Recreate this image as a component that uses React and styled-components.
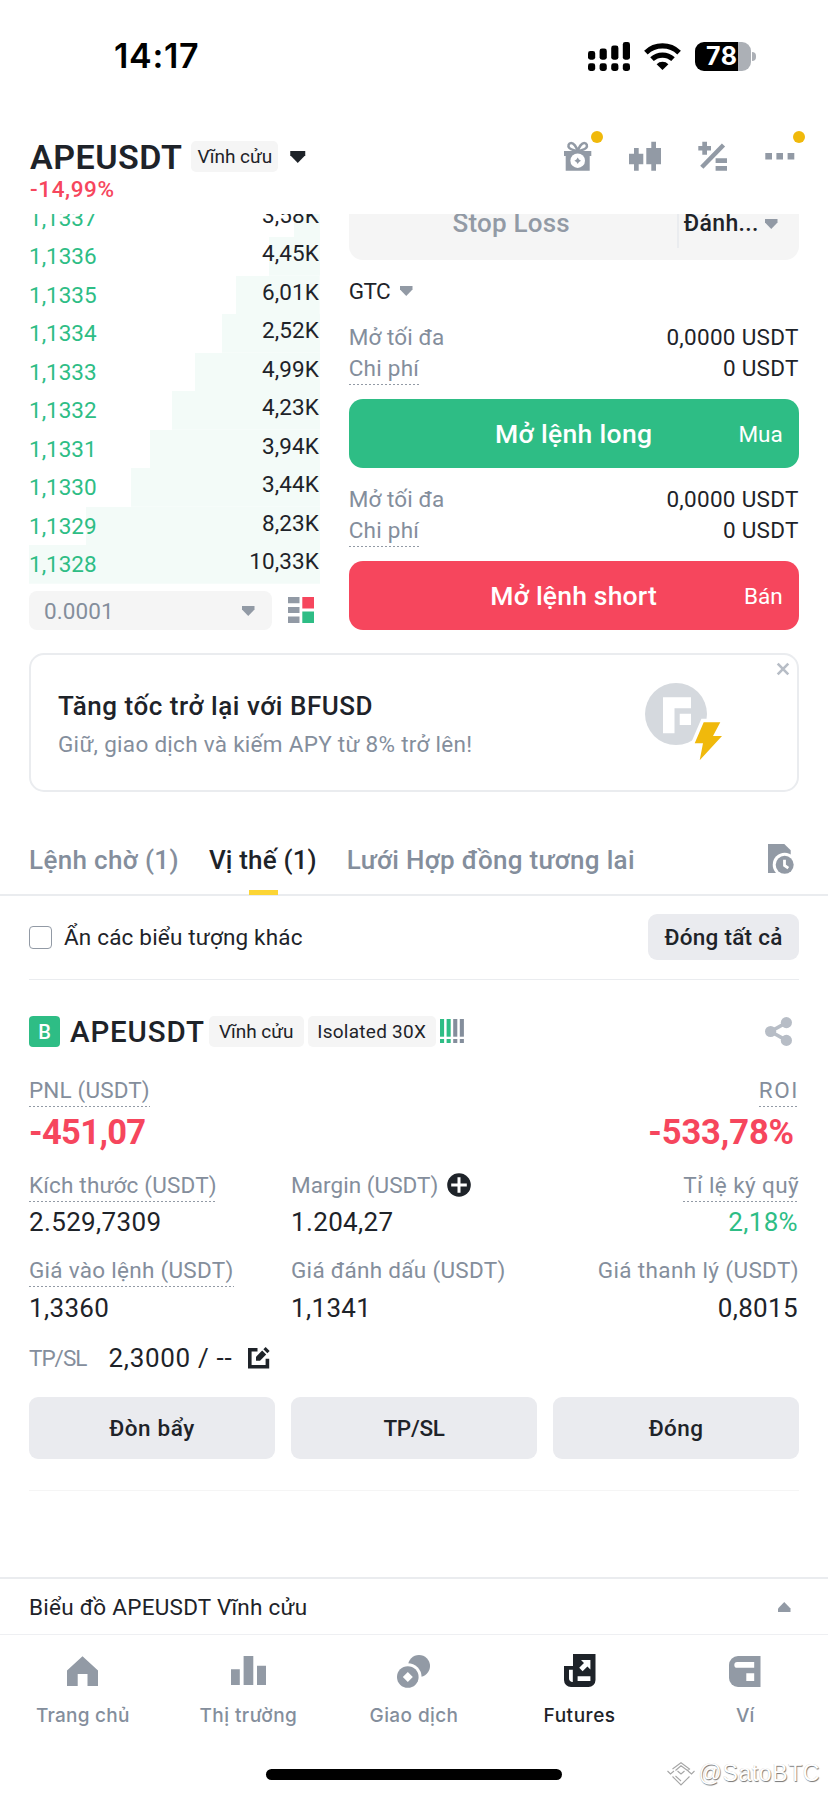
import React from 'react';
import styled, { createGlobalStyle } from 'styled-components';

const c = {
  ink: '#1e2329', sub: '#848e9c', icon: '#929aa5', green: '#2ebd85', red: '#f6465d',
  yellow: '#f0b90b', soft: '#f5f5f5', line: '#eaecef', chip: '#eaebef',
};

const GlobalStyle = createGlobalStyle`
  * { box-sizing: border-box; }
  body { margin: 0; background: #fff; }
  button { border: 0; margin: 0; padding: 0; font: inherit; color: inherit; }
`;

const Screen = styled.div`
  position: relative;
  width: 828px;
  height: 1795px;
  overflow: hidden;
  display: flex;
  flex-direction: column;
  background: #fff;
  color: ${c.ink};
  font-family: Roboto, "Noto Sans", sans-serif;
  font-size: 22.5px;
  line-height: 24px;
  white-space: nowrap;
`;

const Text = styled.span`
  color: ${p => p.$color || 'inherit'};
  font-size: ${p => p.$size || 22.5}px;
  font-weight: ${p => p.$weight || 400};
  letter-spacing: ${p => p.$track || 0}px;
`;

const Icon = styled.svg`
  display: block;
  flex: none;
  overflow: visible;
`;

/* ---------- status bar ---------- */
const StatusBar = styled.header`
  flex: none;
  height: 111px;
  padding: 1px 77px 0 114px;
  display: flex;
  align-items: center;
  color: #000;
  font-family: Inter, sans-serif;
`;
const StatusIcons = styled.div`
  margin-left: auto;
  display: flex;
  align-items: center;
  gap: 14px;
`;
const Battery = styled.div`
  position: relative;
  width: 56px;
  height: 29px;
  border-radius: 9px;
  background: linear-gradient(90deg, #000 43px, #acb0b6 43px);
  color: #fff;
  padding-left: 11px;
  line-height: 29px;
  &::after {
    content: '';
    position: absolute;
    left: 57px;
    top: 10px;
    width: 3.5px;
    height: 9px;
    border-radius: 0 4px 4px 0;
    background: #acb0b6;
  }
`;

/* ---------- symbol header ---------- */
const SymbolHeader = styled.section`
  flex: none;
  height: 103px;
  padding: 30px 32px 0 30px;
  display: flex;
  justify-content: space-between;
  align-items: flex-start;
`;
const SymbolTitle = styled.div`
  display: flex;
  align-items: center;
  height: 31px;
`;
const TitleCaret = styled.span`
  margin-left: 12px;
`;
const Change = styled.div`
  margin-top: 5px;
  height: 24px;
`;
const Tag = styled.span`
  height: 31px;
  line-height: 31px;
  width: ${p => p.$w}px;
  margin-left: ${p => p.$ml || 0}px;
  text-align: center;
  border-radius: 5px;
  background: ${c.soft};
  font-size: 19px;
  letter-spacing: ${p => p.$track || 0}px;
`;
const Tools = styled.div`
  display: flex;
  gap: 35.3px;
  margin-top: -1px;
`;
const Tool = styled.div`
  position: relative;
  width: 32px;
  height: 32px;
  &::after {
    content: '';
    display: ${p => (p.$dot ? 'block' : 'none')};
    position: absolute;
    left: 29px;
    top: -9px;
    width: 12px;
    height: 12px;
    border-radius: 50%;
    background: ${c.yellow};
  }
`;

/* ---------- trading area ---------- */
const TradeArea = styled.section`
  flex: none;
  height: 416px;
  overflow: hidden;
  padding: 0 29px;
  display: grid;
  grid-template-columns: 291px 450px;
  column-gap: 28.7px;
`;
const OrderBook = styled.div`
  margin-top: -15.5px;
`;
const BookRow = styled.div`
  display: flex;
  justify-content: space-between;
  height: 38.5px;
  padding: 0 1px 0 0;
  background: linear-gradient(#f3fbf8, #f3fbf8) right / ${p => p.$depth}px 100% no-repeat;
`;
const Price = styled.span`
  padding-top: 7px;
  color: ${c.green};
`;
const Amount = styled.span`
  padding-top: 4px;
  letter-spacing: 0.1px;
`;
const BookFooter = styled.div`
  display: flex;
  align-items: center;
  margin-top: 7.5px;
`;
const Precision = styled.div`
  width: 243px;
  height: 38.5px;
  margin-right: 15.5px;
  padding: 1px 18px 0 15px;
  display: flex;
  align-items: center;
  justify-content: space-between;
  border-radius: 8px;
  background: ${c.soft};
  color: ${c.sub};
`;
const OrderForm = styled.div`
  display: flex;
  flex-direction: column;
  margin-top: -23px;
`;
const StopLossField = styled.div`
  flex: none;
  height: 69px;
  display: flex;
  align-items: center;
  padding: 0 21px 4px 0;
  border-radius: 0 0 14px 14px;
  background: ${c.soft};
`;
const FieldHint = styled.div`
  width: 328px;
  padding-right: 3px;
  text-align: center;
`;
const FieldMode = styled.div`
  flex: 1;
  height: 49px;
  border-left: 2px solid ${c.line};
  display: flex;
  align-items: center;
  justify-content: space-between;
  padding-left: 5px;
`;
const Tif = styled.div`
  display: flex;
  align-items: center;
  gap: 10px;
  height: 24px;
  margin-top: 19px;
`;
const InfoRow = styled.div`
  flex: none;
  height: 24px;
  margin-top: ${p => p.$mt}px;
  display: flex;
  justify-content: space-between;
  align-items: flex-start;
`;
const Hint = styled.span`
  display: inline-block;
  flex: none;
  height: 29px;
  color: ${c.sub};
  letter-spacing: ${p => p.$track || 0.1}px;
  background: ${p => (p.$dashed
    ? `linear-gradient(90deg, ${c.icon} 55%, transparent 55%) left bottom / 4px 1px repeat-x`
    : 'none')};
`;
const OrderButton = styled.button`
  flex: none;
  height: 69px;
  margin-top: 19px;
  padding: 0 16px;
  display: grid;
  grid-template-columns: 1fr auto 1fr;
  align-items: center;
  border-radius: 14px;
  background: ${p => p.$bg};
  color: #fff;
`;
const Side = styled.span`
  justify-self: end;
`;

/* ---------- promo banner ---------- */
const Banner = styled.section`
  flex: none;
  position: relative;
  height: 138.5px;
  margin: 23px 29px 0;
  padding: 0 74px 0 27px;
  display: flex;
  justify-content: space-between;
  border: 2px solid ${c.line};
  border-radius: 15px;
`;
const BannerCopy = styled.div`
  padding-top: 39px;
  display: flex;
  flex-direction: column;
  gap: 14px;
`;
const BannerArt = styled.div`
  padding-top: 27.5px;
`;
const CloseMark = styled.div`
  position: absolute;
  right: 8px;
  top: 8px;
`;

/* ---------- tabs ---------- */
const Tabs = styled.nav`
  flex: none;
  height: 65.5px;
  margin-top: 38.5px;
  padding: 0 34px 0 29px;
  display: flex;
  border-bottom: 2px solid ${c.line};
`;
const Tab = styled.div`
  position: relative;
  margin-right: 30px;
  line-height: 60px;
  font-size: 26px;
  font-weight: 500;
  letter-spacing: ${p => p.$track}px;
  color: ${p => (p.$active ? c.ink : c.sub)};
  &::after {
    content: '';
    display: ${p => (p.$active ? 'block' : 'none')};
    position: absolute;
    left: calc(50% - 14px);
    bottom: -1px;
    width: 29px;
    height: 5px;
    background: #fcd535;
  }
`;
const History = styled.div`
  margin: 14px 0 0 auto;
`;

/* ---------- position list ---------- */
const FilterRow = styled.div`
  flex: none;
  height: 84px;
  margin: 0 29px;
  display: flex;
  align-items: center;
  border-bottom: 1.5px solid ${c.line};
`;
const Checkbox = styled.span`
  width: 23px;
  height: 23px;
  margin-right: 12px;
  border: 1.5px solid ${c.icon};
  border-radius: 4px;
`;
const CloseAll = styled.button`
  width: 151px;
  height: 46px;
  margin-left: auto;
  border-radius: 9px;
  background: ${c.chip};
`;
const Position = styled.section`
  flex: none;
  height: 511px;
  margin: 0 29px;
  padding-top: 36px;
  border-bottom: 1.5px solid #f5f5f5;
`;
const PositionHead = styled.div`
  display: flex;
  align-items: center;
  height: 31px;
`;
const PositionName = styled.span`
  padding-top: 2px;
  font-size: 29.5px;
  font-weight: 500;
  letter-spacing: 0.85px;
`;
const SideBadge = styled.span`
  width: 31px;
  height: 31px;
  margin-right: 10px;
  line-height: 32px;
  text-align: center;
  border-radius: 4px;
  background: ${c.green};
  color: #fff;
  font-size: 20px;
  font-weight: 500;
`;
const LeverageSlot = styled.span`
  margin-left: 4px;
`;
const Share = styled.div`
  margin: 0 7px 0 auto;
`;
const Stats = styled.div`
  display: grid;
  grid-template-columns: ${p => p.$cols};
  column-gap: 16px;
  margin-top: ${p => p.$mt}px;
`;
const Stat = styled.div`
  display: flex;
  flex-direction: column;
  align-items: ${p => (p.$end ? 'flex-end' : 'flex-start')};
`;
const StatLabel = styled.div`
  display: flex;
  height: 29px;
  gap: 9px;
`;
const BigValue = styled.div`
  height: 36px;
  margin-top: 7px;
  padding: 0 5px 0 0;
  line-height: 36px;
  font-size: 34.5px;
  font-weight: 700;
  color: ${c.red};
  letter-spacing: ${p => p.$track}px;
`;
const Value = styled.div`
  height: 28px;
  margin-top: 6.5px;
  padding: 0 1px 0 0;
  line-height: 28px;
  font-size: 26px;
  letter-spacing: 0.35px;
  color: ${p => p.$color || c.ink};
`;
const TpSlRow = styled.div`
  display: flex;
  align-items: center;
  height: 28px;
  margin-top: 22px;
`;
const TpSlLabel = styled.span`
  width: 79.5px;
  color: ${c.sub};
  letter-spacing: -1px;
`;
const TpSlValue = styled.span`
  width: 139px;
  font-size: 26px;
  letter-spacing: 0.7px;
`;
const Actions = styled.div`
  display: grid;
  grid-template-columns: repeat(3, 1fr);
  gap: 16px;
  margin-top: 25.5px;
`;
const Action = styled.button`
  height: 62px;
  border-radius: 9px;
  background: ${c.chip};
`;

/* ---------- bottom ---------- */
const ChartBar = styled.div`
  flex: none;
  height: 58px;
  margin-top: auto;
  padding: 1px 38px 0 29px;
  display: flex;
  align-items: center;
  justify-content: space-between;
  border-top: 2px solid ${c.line};
  border-bottom: 1px solid #eeeff2;
`;
const BottomNav = styled.nav`
  flex: none;
  height: 160px;
  display: grid;
  grid-template-columns: repeat(5, 1fr);
`;
const NavItem = styled.div`
  display: flex;
  flex-direction: column;
  align-items: center;
  color: ${p => (p.$active ? c.ink : c.sub)};
  font: 500 19px/24px Inter, "Noto Sans", sans-serif;
  letter-spacing: ${p => p.$track}px;
`;
const NavIcon = styled.div`
  height: 69px;
  padding-top: 19px;
  display: flex;
  justify-content: center;
  align-items: flex-start;
`;
const HomeIndicator = styled.div`
  position: absolute;
  left: 266px;
  top: 1769px;
  width: 296px;
  height: 10.5px;
  border-radius: 6px;
  background: #000;
`;
const Watermark = styled.div`
  position: absolute;
  right: 8px;
  top: 1760px;
  display: flex;
  align-items: center;
  gap: 4px;
  color: #fff;
  font: 400 23px/27px "Liberation Sans", Arial, sans-serif;
  letter-spacing: 0.6px;
  text-shadow: 0.8px 0.8px 0.8px #777, -0.3px -0.3px 0.5px #ccc;
`;

const Caret = ({ w = 12.5, h = 10, color = c.icon, up }) => (
  <Icon width={w} height={h} viewBox="0 0 12.5 10" fill={color}>
    <path d={up ? 'M0 10V6.500L6.25 0L12.5 6.500V10Z' : 'M0 0V3.5L6.25 10L12.5 3.5V0Z'} />
  </Icon>
);

const Signal = () => (
  <Icon width="42" height="29" viewBox="0 0 42 29">
    {[9, 6.5, 3.5, 0].map((y, i) => (
      <g key={y}>
        <rect x={i * 11.6} y={y} width="7.2" height={17.7 - y} rx="2.4" />
        <rect x={i * 11.6} y="21.3" width="7.2" height="7.7" rx="2.4" />
      </g>
    ))}
  </Icon>
);
const Wifi = () => (
  <Icon width="37" height="27" viewBox="0 0 37 27">
    <path d="M1.9 9.6A24 24 0 0 1 35.1 9.6" fill="none" stroke="#000" strokeWidth="5.2" />
    <path d="M8 16.2A15.4 15.4 0 0 1 29 16.2" fill="none" stroke="#000" strokeWidth="5.2" />
    <path d="M18.5 27L12.6 21.2A8.6 8.6 0 0 1 24.4 21.2Z" />
  </Icon>
);

const Gift = () => (
  <Icon width="32" height="32" viewBox="0 0 32 32" fill={c.icon}>
    <g fill="none" stroke={c.icon} strokeWidth="2.5">
      <path d="M15.7 11.5C14.5 6.5 11.5 3 9.2 3C6.6 3 5.6 6 7.3 8C9 10 12 10.2 15.7 11.5" />
      <path d="M15.7 11.5C16.9 6.5 19.9 3 22.2 3C24.8 3 25.8 6 24.1 8C22.4 10 19.4 10.2 15.7 11.5" />
    </g>
    <path d="M2 11H29.3V16H27.7V30.7H3.7V16H2Z" />
    <circle cx="15.7" cy="20.7" r="7.3" fill="#fff" />
    <path d="M15.7 17.4L17 19.5L19 20.7L17 22L15.7 24L14.4 22L12.4 20.7L14.4 19.5Z" />
  </Icon>
);
const Candles = () => (
  <Icon width="32" height="32" viewBox="0 0 32 32" fill={c.icon}>
    <path d="M5 8H9.7V13.7H14.3V24.3H9.7V30.7H5V24.3H0V13.7H5Z" />
    <path d="M22.3 1.7H27V8H32V24.3H27V30.7H22.3V24.3H17.3V8H22.3Z" />
  </Icon>
);
const Calculator = () => (
  <Icon width="32" height="32" viewBox="0.7 0 32 32" fill={c.icon}>
    <path d="M6 1.7H10.7V5.9H14.7V10.5H10.7V14.7H6V10.5H2V5.9H6Z" />
    <path d="M5.5 27.2L27.2 5" stroke={c.icon} strokeWidth="4.5" />
    <path d="M19.3 18.3H30.7V23H19.3ZM19.3 26H30.7V30.7H19.3Z" />
  </Icon>
);
const More = () => (
  <Icon width="32" height="32" viewBox="0 0 32 32" fill={c.icon}>
    <path d="M1.3 13H8V19.6H1.3ZM12.4 13H19V19.6H12.4ZM23.6 13H30.3V19.6H23.6Z" />
  </Icon>
);
const BookLayout = () => (
  <Icon width="26" height="26" viewBox="0 0 26 26">
    <path fill={c.icon} d="M0 0H11.5V6.3H0ZM0 10H11.5V16H0ZM0 19.6H11.5V26H0Z" />
    <path fill={c.red} d="M14.3 0H26V11.5H14.3Z" />
    <path fill={c.green} d="M14.3 14.5H26V26H14.3Z" />
  </Icon>
);
const BannerIcon = () => (
  <Icon width="78" height="78" viewBox="0 0 78 78">
    <circle cx="31" cy="31" r="31" fill="#d5d9de" />
    <path fill="#fff" d="M18 14.3H46V25.3H29.5V50.3H18ZM34.7 30.7H46V42H34.7Z" />
    <path d="M58.7 39.3H75.3L68 53H77L54.7 77.3L58 60.3H49.7Z" fill={c.yellow} stroke="#fff" strokeWidth="7" paintOrder="stroke" />
  </Icon>
);
const HistoryIcon = () => (
  <Icon width="26" height="30" viewBox="0 0 26 30" fill={c.icon}>
    <path d="M0 0H16.3L22.7 6.3V29H0Z" />
    <circle cx="16.7" cy="20.8" r="12" fill="#fff" />
    <circle cx="16.7" cy="20.8" r="9" />
    <path d="M16.5 15.8V21.5L20.3 24.2" fill="none" stroke="#fff" strokeWidth="2.8" />
  </Icon>
);
const Leverage = () => (
  <Icon width="24" height="24" viewBox="0 0 24 24">
    {[c.green, c.green, c.sub, c.sub].map((f, i) => (
      <g key={i} fill={f}>
        <rect x={i * 6.6} width="4.1" height="17.7" />
        <rect x={i * 6.6} y="20" width="4.1" height="4" />
      </g>
    ))}
  </Icon>
);
const ShareIcon = () => (
  <Icon width="27" height="29" viewBox="0 0 27 29" fill="#b7bdc6">
    <path d="M5.6 14.5L21.4 5.6M5.6 14.5L21.4 23.4" stroke="#b7bdc6" strokeWidth="3.6" />
    <circle cx="5.6" cy="14.5" r="5.6" />
    <circle cx="21.4" cy="5.6" r="5.6" />
    <circle cx="21.4" cy="23.4" r="5.6" />
  </Icon>
);
const PlusCircle = () => (
  <Icon width="24" height="24" viewBox="0 0 24 24">
    <circle cx="12" cy="12" r="11.8" fill={c.ink} />
    <path d="M12 4.2V19.8M4.2 12H19.8" stroke="#fff" strokeWidth="3" />
  </Icon>
);
const EditIcon = () => (
  <Icon width="22" height="22" viewBox="0 0 22 22" fill={c.ink}>
    <path d="M0 1H9.5V4.4H3.6V18H17.6V11.8H21.2V21.4H0Z" />
    <path d="M8 9.7L14.2 3.4L18.2 7.4L12 13.7H8Z" />
    <path d="M15.4 2.2L17.6 0L21.6 4L19.4 6.2Z" />
  </Icon>
);

const HomeIcon = () => (
  <Icon width="31" height="32" viewBox="0 0 31 32" fill={c.icon}>
    <path d="M0 16.5L15.5 2.2L31 16.5V32H20.5V20H10.7V32H0Z" />
  </Icon>
);
const MarketIcon = () => (
  <Icon width="35" height="31" viewBox="0 0 35 31" fill={c.icon}>
    <path d="M0 15.3H8.8V31H0ZM12.6 2H22.3V31H12.6ZM26 11.8H35V31H26Z" />
  </Icon>
);
const TradeIcon = () => (
  <Icon width="33" height="34" viewBox="0 0 33 34" fill={c.icon}>
    <circle cx="22" cy="12" r="11" />
    <circle cx="10.8" cy="23" r="13.8" fill="#fff" />
    <circle cx="10.8" cy="23" r="10.8" />
    <path d="M10.8 18L15.8 23L10.8 28L5.8 23Z" fill="#fff" />
  </Icon>
);
const FuturesIcon = () => (
  <Icon width="31.5" height="33" viewBox="0 0 31.5 33">
    <path fill={c.ink} d="M9 0H31.5V26A7 7 0 0 1 24.5 33H7A7 7 0 0 1 0 26V12H9Z" />
    <path fill="#fff" d="M8.8 15.8V28A3.6 3.6 0 0 1 5 24.4V15.8ZM13.6 22.3H26.4V27H13.6Z" />
    <path fill="#fff" d="M17 6H26.4V15.4L23.4 12.4L18.6 17.2L15.2 13.8L20 9Z" />
  </Icon>
);
const WalletIcon = () => (
  <Icon width="31.5" height="33" viewBox="0 0 31.5 33">
    <path fill={c.icon} d="M9 2H31.5V33H9A9 9 0 0 1 0 24V11A9 9 0 0 1 9 2Z" />
    <path fill="#fff" d="M8.2 8H25.2V13.8H8.2A2.9 2.9 0 0 1 8.2 8ZM17.3 19.2H25.2V27H17.3Z" />
  </Icon>
);
const Diamond = () => (
  <Icon width="28" height="24" viewBox="0 0 28 24" fill="none" stroke="#a6a6a6" strokeWidth="1.1">
    <path d="M5.500 7L14 0.800L22.5 7L20.5 8.500L14 3.8L8.500 8.5M10.5 9L14 12L17.5 9M0.5 9L3.500 12L7 9M21 9L24.500 12L27.5 9M5.500 14.5L14 23L22.5 14.5M8.500 14L14 19" />
  </Icon>
);

const bids = [
  ['1,1337', '3,58K', 26], ['1,1336', '4,45K', 51], ['1,1335', '6,01K', 83.7],
  ['1,1334', '2,52K', 98], ['1,1333', '4,99K', 125], ['1,1332', '4,23K', 148.5],
  ['1,1331', '3,94K', 170], ['1,1330', '3,44K', 189], ['1,1329', '8,23K', 234],
  ['1,1328', '10,33K', 291],
];

const nav = [
  ['Trang chủ', HomeIcon, 0.25], ['Thị trường', MarketIcon, 0.45], ['Giao dịch', TradeIcon, 0.4],
  ['Futures', FuturesIcon, 0.55], ['Ví', WalletIcon, 0],
];

const OrderInfo = ({ top }) => (
  <>
    <InfoRow $mt={top}>
      <Hint>Mở tối đa</Hint>
      <Text $track={0.29}>0,0000 USDT</Text>
    </InfoRow>
    <InfoRow $mt={7}>
      <Hint $dashed $track={0.25}>Chi phí</Hint>
      <Text $track={0.27}>0 USDT</Text>
    </InfoRow>
  </>
);

export default function App() {
  return (
    <Screen>
      <GlobalStyle />
      <StatusBar>
        <Text $size={34} $weight={600} $track={0.69}>14:17</Text>
        <StatusIcons>
          <Signal />
          <Wifi />
          <Battery><Text $size={25} $weight={700} $track={0.5}>78</Text></Battery>
        </StatusIcons>
      </StatusBar>

      <SymbolHeader>
        <div>
          <SymbolTitle>
            <Text $size={34} $weight={600} $track={0.51}>APEUSDT</Text>
            <Tag $w={87} $ml={9}>Vĩnh cửu</Tag>
            <TitleCaret><Caret w={15.5} h={12} color={c.ink} /></TitleCaret>
          </SymbolTitle>
          <Change><Text $color={c.red} $weight={500} $track={0.61}>-14,99%</Text></Change>
        </div>
        <Tools>
          <Tool $dot><Gift /></Tool>
          <Tool><Candles /></Tool>
          <Tool><Calculator /></Tool>
          <Tool $dot><More /></Tool>
        </Tools>
      </SymbolHeader>

      <TradeArea>
        <OrderBook>
          {bids.map(([price, qty, depth]) => (
            <BookRow key={price} $depth={depth}>
              <Price>{price}</Price>
              <Amount>{qty}</Amount>
            </BookRow>
          ))}
          <BookFooter>
            <Precision><Text $track={0.1}>0.0001</Text><Caret /></Precision>
            <BookLayout />
          </BookFooter>
        </OrderBook>
        <OrderForm>
          <StopLossField>
            <FieldHint><Text $size={26} $weight={500} $color={c.icon} $track={0.2}>Stop Loss</Text></FieldHint>
            <FieldMode><Text $size={23} $weight={500} $track={0.38}>Đánh...</Text><Caret /></FieldMode>
          </StopLossField>
          <Tif><Text $track={-0.6}>GTC</Text><Caret /></Tif>
          <OrderInfo top={22} />
          <OrderButton $bg={c.green}>
            <span />
            <Text $size={26.5} $weight={500} $track={0.3}>Mở lệnh long</Text>
            <Side>Mua</Side>
          </OrderButton>
          <OrderInfo top={19} />
          <OrderButton $bg={c.red}>
            <span />
            <Text $size={26.5} $weight={500} $track={0.19}>Mở lệnh short</Text>
            <Side>Bán</Side>
          </OrderButton>
        </OrderForm>
      </TradeArea>

      <Banner>
        <BannerCopy>
          <Text $size={26} $weight={500} $track={0.54}>Tăng tốc trở lại với BFUSD</Text>
          <Text $color={c.sub} $track={0.29}>Giữ, giao dịch và kiếm APY từ 8% trở lên!</Text>
        </BannerCopy>
        <BannerArt><BannerIcon /></BannerArt>
        <CloseMark>
          <Icon width="12" height="12" viewBox="0 0 12 12" stroke="#b7bdc6" strokeWidth="2.6">
            <path d="M0.7 0.7L11.3 11.3M11.3 0.7L0.7 11.3" />
          </Icon>
        </CloseMark>
      </Banner>

      <Tabs>
        <Tab $track={0.35}>Lệnh chờ (1)</Tab>
        <Tab $active $track={0.17}>Vị thế (1)</Tab>
        <Tab $track={0.3}>Lưới Hợp đồng tương lai</Tab>
        <History><HistoryIcon /></History>
      </Tabs>

      <FilterRow>
        <Checkbox />
        <Text $track={0.18}>Ẩn các biểu tượng khác</Text>
        <CloseAll><Text $weight={500} $track={0.27}>Đóng tất cả</Text></CloseAll>
      </FilterRow>

      <Position>
        <PositionHead>
          <SideBadge>B</SideBadge>
          <PositionName>APEUSDT</PositionName>
          <Tag $w={95} $ml={4}>Vĩnh cửu</Tag>
          <Tag $w={128} $ml={4} $track={0.26}>Isolated 30X</Tag>
          <LeverageSlot><Leverage /></LeverageSlot>
          <Share><ShareIcon /></Share>
        </PositionHead>

        <Stats $cols="1fr 1fr" $mt={31.5}>
          <Stat>
            <StatLabel><Hint $dashed $track={0.15}>PNL (USDT)</Hint></StatLabel>
            <BigValue $track={-0.65}>-451,07</BigValue>
          </Stat>
          <Stat $end>
            <StatLabel><Hint $dashed $track={1.6}>ROI</Hint></StatLabel>
            <BigValue $track={-0.1}>-533,78%</BigValue>
          </Stat>
        </Stats>
        <Stats $cols="246px 246px 246px" $mt={22.5}>
          <Stat>
            <StatLabel><Hint $dashed $track={0.18}>Kích thước (USDT)</Hint></StatLabel>
            <Value>2.529,7309</Value>
          </Stat>
          <Stat>
            <StatLabel><Hint $track={0.05}>Margin (USDT)</Hint><PlusCircle /></StatLabel>
            <Value>1.204,27</Value>
          </Stat>
          <Stat $end>
            <StatLabel><Hint $dashed $track={0.4}>Tỉ lệ ký quỹ</Hint></StatLabel>
            <Value $color={c.green}>2,18%</Value>
          </Stat>
        </Stats>
        <Stats $cols="246px 246px 246px" $mt={22}>
          <Stat>
            <StatLabel><Hint $dashed $track={0.28}>Giá vào lệnh (USDT)</Hint></StatLabel>
            <Value>1,3360</Value>
          </Stat>
          <Stat>
            <StatLabel><Hint $track={0.29}>Giá đánh dấu (USDT)</Hint></StatLabel>
            <Value>1,1341</Value>
          </Stat>
          <Stat $end>
            <StatLabel><Hint $track={0.38}>Giá thanh lý (USDT)</Hint></StatLabel>
            <Value>0,8015</Value>
          </Stat>
        </Stats>
        <TpSlRow>
          <TpSlLabel>TP/SL</TpSlLabel>
          <TpSlValue>2,3000 / --</TpSlValue>
          <EditIcon />
        </TpSlRow>
        <Actions>
          <Action><Text $weight={500} $track={0.6}>Đòn bẩy</Text></Action>
          <Action><Text $weight={500} $track={-0.3}>TP/SL</Text></Action>
          <Action><Text $weight={500} $track={0.4}>Đóng</Text></Action>
        </Actions>
      </Position>

      <ChartBar>
        <Text $track={0.25}>Biểu đồ APEUSDT Vĩnh cửu</Text>
        <Caret up />
      </ChartBar>
      <BottomNav>
        {nav.map(([label, Glyph, track]) => (
          <NavItem key={label} $active={label === 'Futures'} $track={track}>
            <NavIcon><Glyph /></NavIcon>
            {label}
          </NavItem>
        ))}
      </BottomNav>
      <HomeIndicator />
      <Watermark><Diamond />@SatoBTC</Watermark>
    </Screen>
  );
}
